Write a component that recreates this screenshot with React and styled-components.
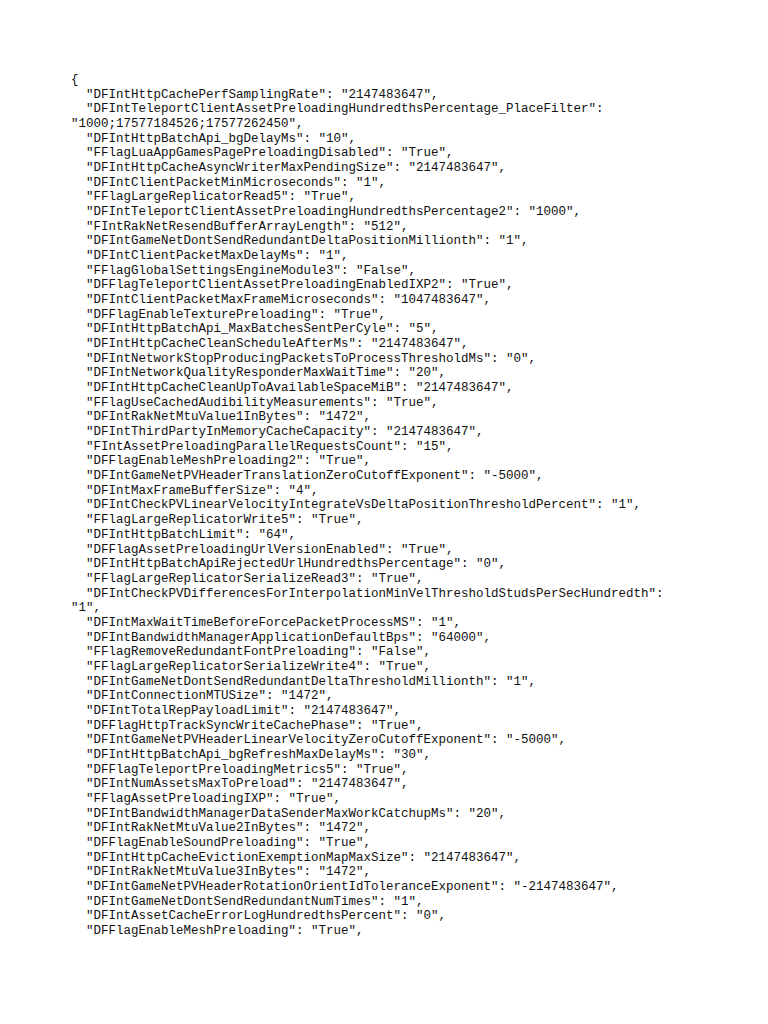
import React from 'react'
import styled, { createGlobalStyle } from 'styled-components'

const GlobalStyle = createGlobalStyle`
  html, body {
    margin: 0;
    padding: 0;
    background: #ffffff;
  }
`

const Page = styled.div`
  width: 768px;
  min-height: 1024px;
  box-sizing: border-box;
  padding: 73px 0 0 71px;
  background: #ffffff;
`

const Code = styled.pre`
  margin: 0;
  font-family: "Liberation Mono", "DejaVu Sans Mono", monospace;
  font-size: 12.5px;
  line-height: 14.67px;
  color: #111111;
  white-space: pre;
`

const flags = [
  ['DFIntHttpCachePerfSamplingRate', '2147483647'],
  ['DFIntTeleportClientAssetPreloadingHundredthsPercentage_PlaceFilter', '1000;17577184526;17577262450', true],
  ['DFIntHttpBatchApi_bgDelayMs', '10'],
  ['FFlagLuaAppGamesPagePreloadingDisabled', 'True'],
  ['DFIntHttpCacheAsyncWriterMaxPendingSize', '2147483647'],
  ['DFIntClientPacketMinMicroseconds', '1'],
  ['FFlagLargeReplicatorRead5', 'True'],
  ['DFIntTeleportClientAssetPreloadingHundredthsPercentage2', '1000'],
  ['FIntRakNetResendBufferArrayLength', '512'],
  ['DFIntGameNetDontSendRedundantDeltaPositionMillionth', '1'],
  ['DFIntClientPacketMaxDelayMs', '1'],
  ['FFlagGlobalSettingsEngineModule3', 'False'],
  ['DFFlagTeleportClientAssetPreloadingEnabledIXP2', 'True'],
  ['DFIntClientPacketMaxFrameMicroseconds', '1047483647'],
  ['DFFlagEnableTexturePreloading', 'True'],
  ['DFIntHttpBatchApi_MaxBatchesSentPerCyle', '5'],
  ['DFIntHttpCacheCleanScheduleAfterMs', '2147483647'],
  ['DFIntNetworkStopProducingPacketsToProcessThresholdMs', '0'],
  ['DFIntNetworkQualityResponderMaxWaitTime', '20'],
  ['DFIntHttpCacheCleanUpToAvailableSpaceMiB', '2147483647'],
  ['FFlagUseCachedAudibilityMeasurements', 'True'],
  ['DFIntRakNetMtuValue1InBytes', '1472'],
  ['DFIntThirdPartyInMemoryCacheCapacity', '2147483647'],
  ['FIntAssetPreloadingParallelRequestsCount', '15'],
  ['DFFlagEnableMeshPreloading2', 'True'],
  ['DFIntGameNetPVHeaderTranslationZeroCutoffExponent', '-5000'],
  ['DFIntMaxFrameBufferSize', '4'],
  ['DFIntCheckPVLinearVelocityIntegrateVsDeltaPositionThresholdPercent', '1'],
  ['FFlagLargeReplicatorWrite5', 'True'],
  ['DFIntHttpBatchLimit', '64'],
  ['DFFlagAssetPreloadingUrlVersionEnabled', 'True'],
  ['DFIntHttpBatchApiRejectedUrlHundredthsPercentage', '0'],
  ['FFlagLargeReplicatorSerializeRead3', 'True'],
  ['DFIntCheckPVDifferencesForInterpolationMinVelThresholdStudsPerSecHundredth', '1', true],
  ['DFIntMaxWaitTimeBeforeForcePacketProcessMS', '1'],
  ['DFIntBandwidthManagerApplicationDefaultBps', '64000'],
  ['FFlagRemoveRedundantFontPreloading', 'False'],
  ['FFlagLargeReplicatorSerializeWrite4', 'True'],
  ['DFIntGameNetDontSendRedundantDeltaThresholdMillionth', '1'],
  ['DFIntConnectionMTUSize', '1472'],
  ['DFIntTotalRepPayloadLimit', '2147483647'],
  ['DFFlagHttpTrackSyncWriteCachePhase', 'True'],
  ['DFIntGameNetPVHeaderLinearVelocityZeroCutoffExponent', '-5000'],
  ['DFIntHttpBatchApi_bgRefreshMaxDelayMs', '30'],
  ['DFFlagTeleportPreloadingMetrics5', 'True'],
  ['DFIntNumAssetsMaxToPreload', '2147483647'],
  ['FFlagAssetPreloadingIXP', 'True'],
  ['DFIntBandwidthManagerDataSenderMaxWorkCatchupMs', '20'],
  ['DFIntRakNetMtuValue2InBytes', '1472'],
  ['DFFlagEnableSoundPreloading', 'True'],
  ['DFIntHttpCacheEvictionExemptionMapMaxSize', '2147483647'],
  ['DFIntRakNetMtuValue3InBytes', '1472'],
  ['DFIntGameNetPVHeaderRotationOrientIdToleranceExponent', '-2147483647'],
  ['DFIntGameNetDontSendRedundantNumTimes', '1'],
  ['DFIntAssetCacheErrorLogHundredthsPercent', '0'],
  ['DFFlagEnableMeshPreloading', 'True'],
]

// long entries wrap onto the next line with no indent, like the source file
const text = ['{']
  .concat(
    flags.map(([key, value, wrap]) =>
      wrap
        ? `  "${key}":\n"${value}",`
        : `  "${key}": "${value}",`
    )
  )
  .join('\n')

const App = () => (
  <>
    <GlobalStyle />
    <Page>
      <Code>{text}</Code>
    </Page>
  </>
)

export default App
